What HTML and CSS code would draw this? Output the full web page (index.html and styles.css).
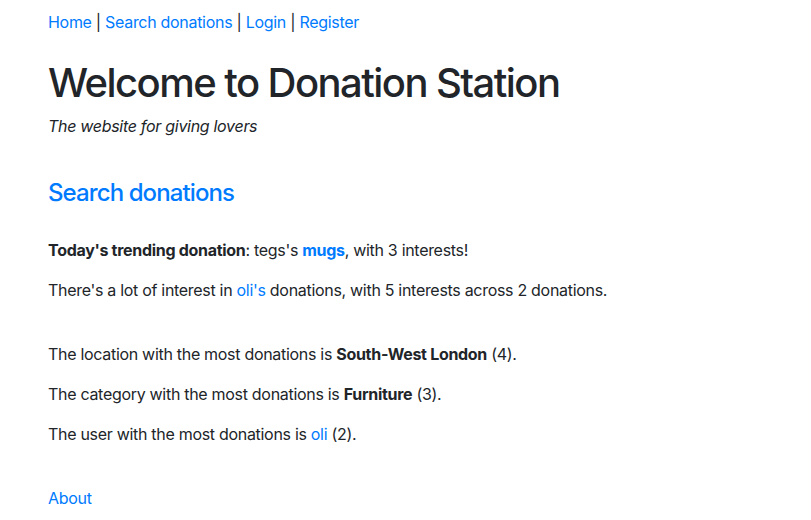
FILE: index.html
```html
<!DOCTYPE html>
<html lang="en">
<head>
<meta charset="utf-8">
<title>Donation Station</title>
<link rel="stylesheet" href="styles.css">
</head>
<body>
<div class="page">
  <nav class="topnav">
    <a href="#">Home</a> | <a href="#">Search donations</a> | <a href="#">Login</a> | <a href="#">Register</a>
  </nav>
  <header class="hero">
    <h1 class="title">Welcome to Donation Station</h1>
    <p class="tagline">The website for giving lovers</p>
  </header>
  <h4 class="section-link"><a href="#">Search donations</a></h4>
  <section class="stats">
    <p><strong>Today's trending donation</strong>: tegs's <a href="#" class="strong-link">mugs</a>, with 3 interests!</p>
    <p>There's a lot of interest in <a href="#">oli's</a> donations, with 5 interests across 2 donations.</p>
    <p class="gap-before">The location with the most donations is <strong>South-West London</strong> (4).</p>
    <p>The category with the most donations is <strong>Furniture</strong> (3).</p>
    <p>The user with the most donations is <a href="#">oli</a> (2).</p>
  </section>
  <footer class="foot">
    <a href="#">About</a>
  </footer>
</div>
</body>
</html>
```
FILE: styles.css
```css
html, body {
  margin: 0;
  padding: 0;
  background: #fff;
}
body {
  font-family: Inter, "Noto Sans", "Liberation Sans", sans-serif;
  font-size: 16px;
  line-height: 24px;
  letter-spacing: -0.3px;
  color: #212529;
}
a {
  color: #007bff;
  text-decoration: none;
}
.page {
  padding: 10px 0 0 48px;
}
.topnav {
  line-height: 24px;
}
.hero {
  margin-top: 25px;
}
.title {
  margin: 0;
  font-size: 40px;
  line-height: 48px;
  font-weight: 500;
  letter-spacing: -1.55px;
}
.tagline {
  margin: 7px 0 0 0;
  font-style: italic;
}
.section-link {
  margin: 40px 0 0 0;
  font-size: 24px;
  line-height: 29px;
  font-weight: 500;
  letter-spacing: -0.9px;
}
.stats {
  margin-top: 31px;
}
.stats p {
  margin: 0 0 16px 0;
}
.stats .gap-before {
  margin-top: 40px;
}
.strong-link {
  font-weight: 700;
}
strong {
  font-weight: 700;
}
.foot {
  margin-top: 40px;
}
```
